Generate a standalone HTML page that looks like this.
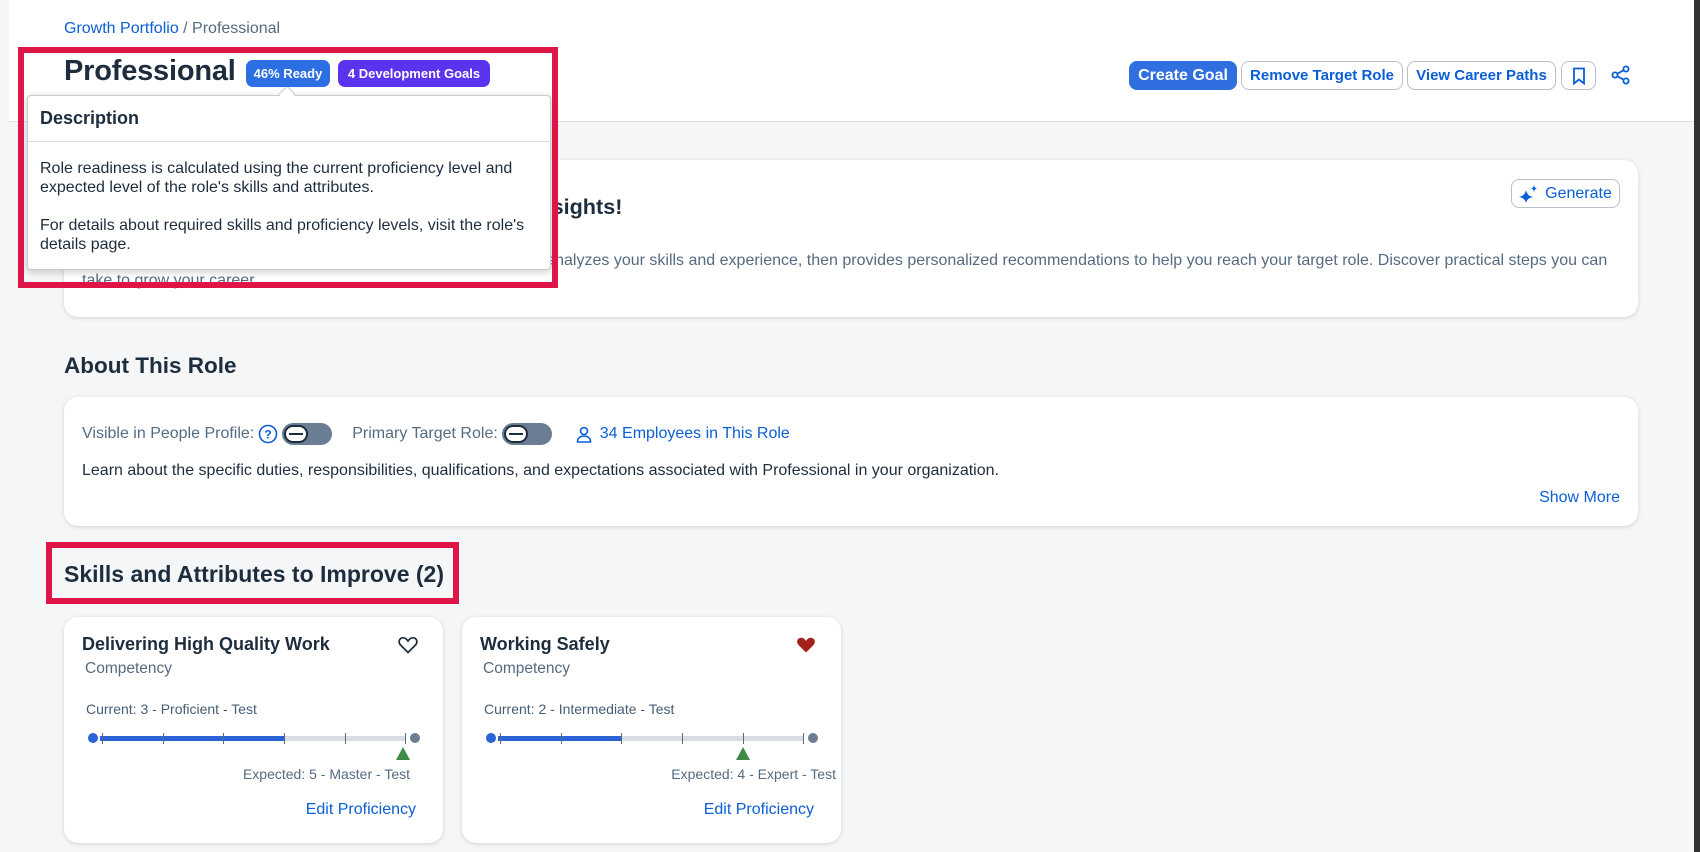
<!DOCTYPE html>
<html><head><meta charset="utf-8"><style>
*{box-sizing:border-box;margin:0;padding:0}
body{width:1700px;height:852px;overflow:hidden;background:#f5f6f7;font-family:"Liberation Sans",sans-serif;color:#1d2d3e;position:relative}
.a{position:absolute;white-space:nowrap}
.hdr{position:absolute;left:9px;top:0;width:1686px;height:122px;background:#fff;border-bottom:1px solid #d9dde2}
.blue{color:#0a5fd6}
.btn{position:absolute;top:61px;height:29px;border:1px solid #b8c0c9;border-radius:8px;background:#fff;color:#0a5fd6;font-size:15px;font-weight:bold;display:flex;align-items:center;justify-content:center}
.card{position:absolute;background:#fff;border-radius:14px;box-shadow:0 1px 4px rgba(0,0,0,.15)}
.muted{color:#556b82}
.bar{position:absolute;height:5px;background:#d9dde2;top:736px}
.tick{position:absolute;width:1px;height:11px;background:#556b82;top:733px}
.dot{position:absolute;width:10px;height:10px;border-radius:50%;top:733px}
.tri{position:absolute;width:0;height:0;border-left:7px solid transparent;border-right:7px solid transparent;border-bottom:13px solid #3e8b46;top:747px}
</style></head><body>
<div class="hdr"></div>
<div style="position:absolute;right:0;top:0;width:6px;height:852px;background:#333"></div>
<div class="a blue" style="left:64px;top:20px;font-size:16px">Growth Portfolio <span style="color:#556b82">/ Professional</span></div>

<div class="btn" style="left:1129px;width:108px;background:#2f6fe0;border-color:#2f6fe0;color:#fff;font-size:16px">Create Goal</div>
<div class="btn" style="left:1241px;width:162px">Remove Target Role</div>
<div class="btn" style="left:1407px;width:149px">View Career Paths</div>
<div class="btn" style="left:1561px;width:35px"><svg width="14" height="18" viewBox="0 0 14 18"><path d="M2 1.5h10v15l-5-4-5 4z" fill="none" stroke="#0a5fd6" stroke-width="1.8"/></svg></div>
<svg class="a" style="left:1610px;top:64px" width="22" height="22" viewBox="0 0 22 22"><g fill="none" stroke="#0a5fd6" stroke-width="1.8"><circle cx="16" cy="5" r="2.6"/><circle cx="16" cy="17" r="2.6"/><circle cx="5" cy="11" r="2.6"/><path d="M7.3 9.8 13.7 6.2M7.3 12.2l6.4 3.6"/></g></svg>

<!-- AI card -->
<div class="card" style="left:64px;top:160px;width:1574px;height:157px"></div>
<div class="a" style="left:82px;top:194px;font-size:21.6px;font-weight:bold">Get Your Personalized Career Development Insights!</div>
<div class="a muted" style="left:82px;top:251px;font-size:16px;line-height:20px">Our AI-powered career development assistant reviews your data, analyzes your skills and experience, then provides personalized recommendations to help you reach your target role. Discover practical steps you can<br>take to grow your career.</div>
<div class="a" style="left:1511px;top:179px;width:109px;height:29px;border:1px solid #b8c0c9;border-radius:8px;background:#fff;color:#0a5fd6;font-size:16px;display:flex;align-items:center;justify-content:center;gap:6px"><svg width="20" height="18" viewBox="0 0 20 18"><path d="M7 5 Q8 11 14 12 Q8 13 7 18 Q6 13 0 12 Q6 11 7 5z M15 0 Q15.5 3 18 3.5 Q15.5 4 15 7 Q14.5 4 12 3.5 Q14.5 3 15 0z" fill="#0a5fd6"/></svg>Generate</div>

<!-- About -->
<div class="a" style="left:64px;top:353px;font-size:22.5px;font-weight:bold">About This Role</div>
<div class="card" style="left:64px;top:397px;width:1574px;height:129px"></div>
<div class="a muted" style="left:82px;top:423px;font-size:16px;display:flex;align-items:center;gap:4px">Visible in People Profile:
<svg width="20" height="20" viewBox="0 0 20 20"><circle cx="10" cy="10" r="8.5" fill="none" stroke="#0a5fd6" stroke-width="1.6"/><text x="10" y="14.5" font-size="12" font-weight="bold" text-anchor="middle" fill="#0a5fd6" font-family="Liberation Sans">?</text></svg>
<span style="display:inline-block;width:50px;height:22px;border-radius:11px;background:#6a7d92;position:relative"><span style="position:absolute;left:2px;top:2px;width:24px;height:18px;border-radius:9px;border:2px solid #1d2d3e;background:#fff"></span><span style="position:absolute;left:7px;top:10px;width:14px;height:2px;background:#1d2d3e"></span></span>
<span style="margin-left:16px">Primary Target Role:</span>
<span style="display:inline-block;width:50px;height:22px;border-radius:11px;background:#6a7d92;position:relative"><span style="position:absolute;left:2px;top:2px;width:24px;height:18px;border-radius:9px;border:2px solid #1d2d3e;background:#fff"></span><span style="position:absolute;left:7px;top:10px;width:14px;height:2px;background:#1d2d3e"></span></span>
<span class="blue" style="margin-left:20px;display:flex;align-items:center;gap:8px"><svg width="16" height="17" viewBox="0 0 16 17"><g fill="none" stroke="#0a5fd6" stroke-width="1.6"><circle cx="8" cy="5" r="3.5"/><path d="M1.5 16c0-4 3-6 6.5-6s6.5 2 6.5 6z"/></g></svg>34 Employees in This Role</span></div>
<div class="a" style="left:82px;top:462px;font-size:16px">Learn about the specific duties, responsibilities, qualifications, and expectations associated with Professional in your organization.</div>
<div class="a blue" style="right:80px;top:489px;font-size:16px">Show More</div>

<!-- Skills -->
<div class="a" style="left:46px;top:542px;width:413px;height:62px;border:6px solid #de1546"></div>
<div class="a" style="left:64px;top:561px;font-size:23px;font-weight:bold">Skills and Attributes to Improve (2)</div>

<div class="card" style="left:64px;top:617px;width:379px;height:226px"></div>
<div class="a" style="left:82px;top:634px;font-size:18px;font-weight:bold">Delivering High Quality Work</div>
<svg class="a" style="left:398px;top:636px" width="20" height="18" viewBox="0 0 20 18"><path d="M10 16.5 2.5 9C0 6.5 1 2 5 1.8 7.5 1.7 9 3.5 10 5 11 3.5 12.5 1.7 15 1.8 19 2 20 6.5 17.5 9z" fill="none" stroke="#1d2d3e" stroke-width="1.7"/></svg>
<div class="a muted" style="left:85px;top:660px;font-size:15.5px">Competency</div>
<div class="a muted" style="left:86px;top:701px;font-size:14px;color:#475e75">Current: 3 - Proficient - Test</div>
<div class="bar" style="left:100px;width:305px"></div>
<div class="bar" style="left:100px;width:184px;background:#2b63d6"></div>
<div class="dot" style="left:88px;background:#2b63d6"></div>
<div class="dot" style="left:410px;background:#6a7d92"></div>
<div class="tick" style="left:102px"></div><div class="tick" style="left:163px"></div><div class="tick" style="left:223px"></div><div class="tick" style="left:284px"></div><div class="tick" style="left:345px"></div><div class="tick" style="left:405px"></div>
<div class="tri" style="left:396px"></div>
<div class="a muted" style="right:1290px;top:766px;font-size:14px">Expected: 5 - Master - Test</div>
<div class="a blue" style="right:1284px;top:801px;font-size:16px">Edit Proficiency</div>

<div class="card" style="left:462px;top:617px;width:379px;height:226px"></div>
<div class="a" style="left:480px;top:634px;font-size:18px;font-weight:bold">Working Safely</div>
<svg class="a" style="left:796px;top:636px" width="20" height="18" viewBox="0 0 20 18"><path d="M10 16.5 2.5 9C0 6.5 1 2 5 1.8 7.5 1.7 9 3.5 10 5 11 3.5 12.5 1.7 15 1.8 19 2 20 6.5 17.5 9z" fill="#a3211a"/></svg>
<div class="a muted" style="left:483px;top:660px;font-size:15.5px">Competency</div>
<div class="a muted" style="left:484px;top:701px;font-size:14px;color:#475e75">Current: 2 - Intermediate - Test</div>
<div class="bar" style="left:498px;width:305px"></div>
<div class="bar" style="left:498px;width:123px;background:#2b63d6"></div>
<div class="dot" style="left:486px;background:#2b63d6"></div>
<div class="dot" style="left:808px;background:#6a7d92"></div>
<div class="tick" style="left:500px"></div><div class="tick" style="left:561px"></div><div class="tick" style="left:621px"></div><div class="tick" style="left:682px"></div><div class="tick" style="left:743px"></div><div class="tick" style="left:803px"></div>
<div class="tri" style="left:736px"></div>
<div class="a muted" style="right:864px;top:766px;font-size:14px">Expected: 4 - Expert - Test</div>
<div class="a blue" style="right:886px;top:801px;font-size:16px">Edit Proficiency</div>

<!-- popover + highlight -->
<div class="a" style="left:27px;top:95px;width:524px;height:175px;background:#fff;border:1px solid #c5cbd2;border-radius:4px;box-shadow:0 2px 8px rgba(0,0,0,.2)"></div>
<div class="a" style="left:281px;top:88px;width:12px;height:12px;background:#fff;border-left:1px solid #c5cbd2;border-top:1px solid #c5cbd2;transform:rotate(45deg)"></div>
<div class="a" style="left:40px;top:108px;font-size:18px;font-weight:bold">Description</div>
<div class="a" style="left:28px;top:141px;width:522px;height:1px;background:#d9dde2"></div>
<div class="a" style="left:40px;top:159px;font-size:16px;line-height:19px">Role readiness is calculated using the current proficiency level and<br>expected level of the role's skills and attributes.<br><br>For details about required skills and proficiency levels, visit the role's<br>details page.</div>
<div class="a" style="left:64px;top:55px;font-size:29px;font-weight:900;letter-spacing:-0.2px">Professional</div>
<div class="a" style="left:246px;top:60px;width:84px;height:27px;border-radius:7px;background:#2b6fe3;color:#fff;font-size:13px;font-weight:bold;display:flex;align-items:center;justify-content:center">46% Ready</div>
<div class="a" style="left:338px;top:60px;width:152px;height:27px;border-radius:7px;background:#5b32ee;color:#fff;font-size:13px;font-weight:bold;display:flex;align-items:center;justify-content:center">4 Development Goals</div>
<div class="a" style="left:18px;top:47px;width:540px;height:241px;border:6px solid #de1546"></div>
</body></html>
